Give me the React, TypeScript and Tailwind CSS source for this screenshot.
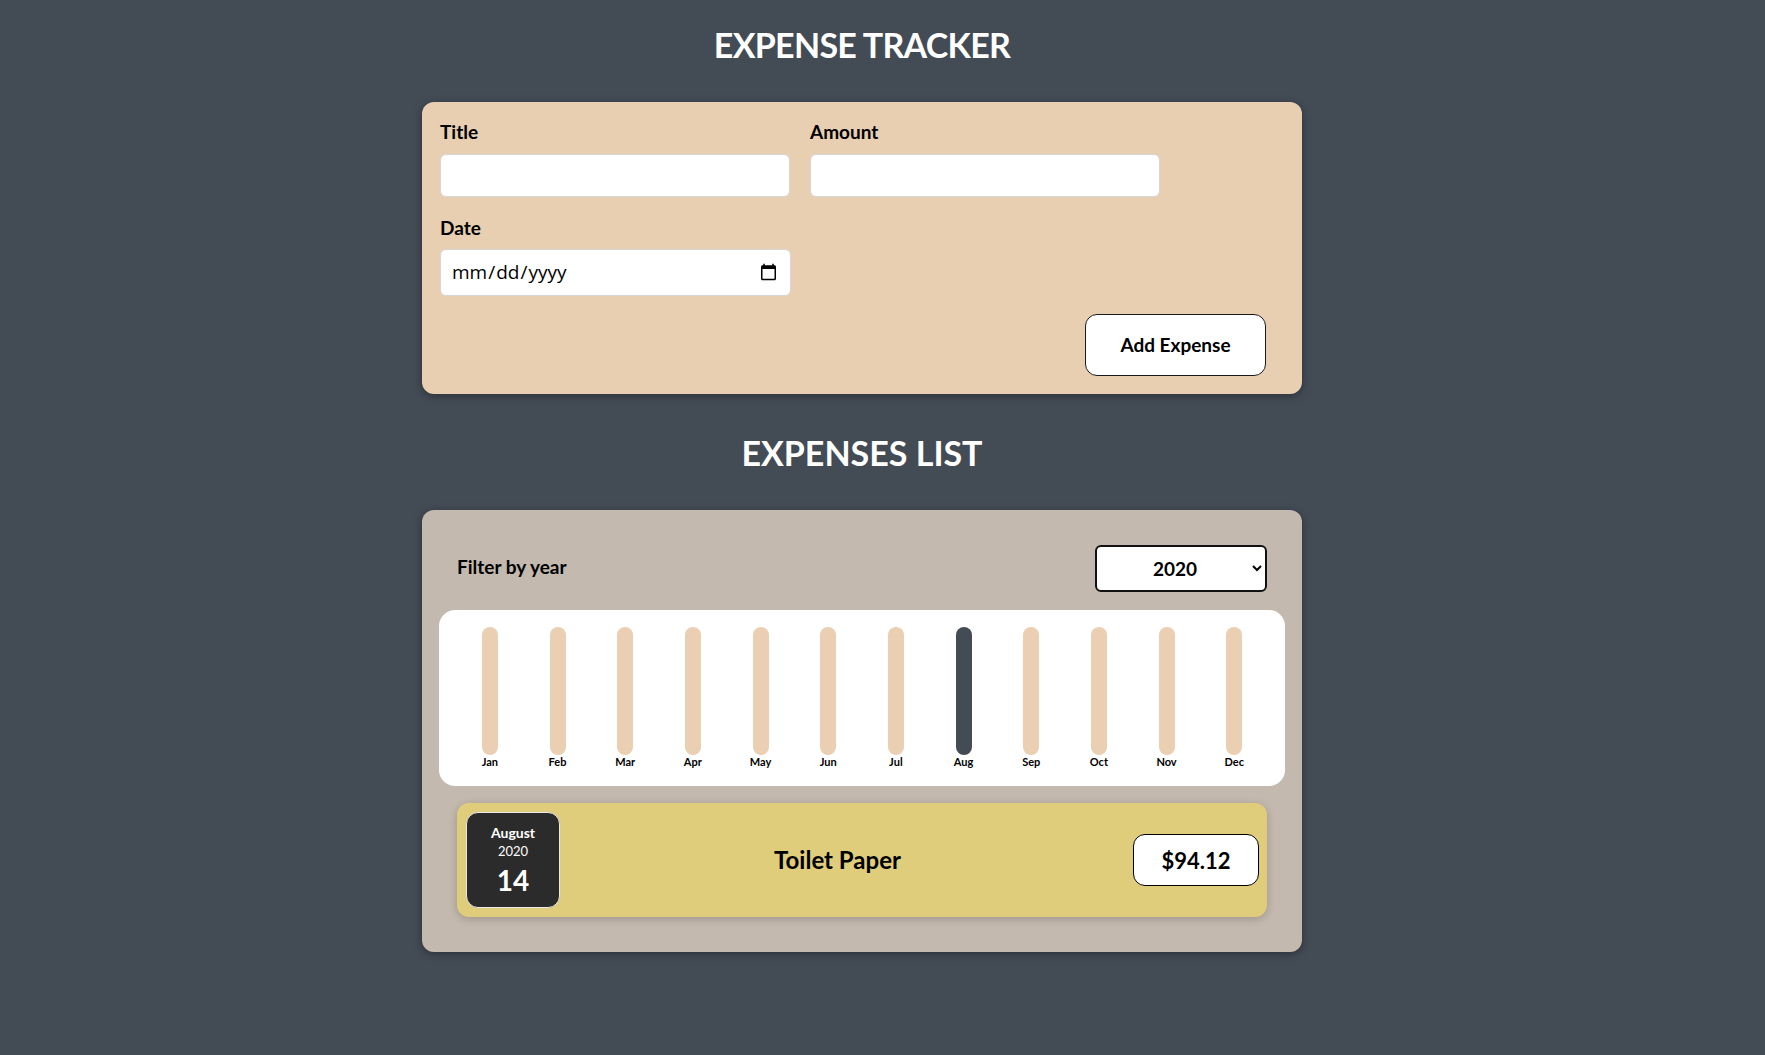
import React from "react";

const months = ["Jan", "Feb", "Mar", "Apr", "May", "Jun", "Jul", "Aug", "Sep", "Oct", "Nov", "Dec"];

function ExpenseForm() {
  return (
    <div className="w-[880px] rounded-[12px] bg-[#e9cfb2] pl-[18px] pr-[36px] pt-[18px] pb-[18px] shadow-[0_2px_8px_rgba(0,0,0,0.35)]">
      <div className="flex flex-wrap gap-x-[20px] gap-y-[19px]">
        <div className="w-[350px]">
          <label className="block text-[19px] leading-[23px] font-bold text-black mb-[11px]">Title</label>
          <input type="text" className="block w-[350px] h-[43px] rounded-[6px] border border-[#d6d6d6] bg-white px-[10px] text-[19px]" />
        </div>
        <div className="w-[350px]">
          <label className="block text-[19px] leading-[23px] font-bold text-black mb-[11px]">Amount</label>
          <input type="number" className="block w-[350px] h-[43px] rounded-[6px] border border-[#d6d6d6] bg-white px-[10px] text-[19px]" />
        </div>
        <div className="w-[350px]">
          <label className="block text-[19px] leading-[23px] font-bold text-black mb-[10px]">Date</label>
          <input
            type="date"
            className="block w-[351px] h-[47px] rounded-[6px] border border-[#d6d6d6] bg-white px-[10px] text-[19px] text-black [font-family:'Open_Sans',sans-serif]"
          />
        </div>
      </div>
      <div className="flex justify-end mt-[18px]">
        <button className="w-[181px] h-[62px] rounded-[12px] border border-[#1a1a1a] bg-white text-[19px] font-bold text-black">
          Add Expense
        </button>
      </div>
    </div>
  );
}

function Chart() {
  return (
    <div className="flex rounded-[16px] bg-white p-[17px]">
      {months.map((m) => (
        <div key={m} className="flex flex-1 flex-col items-center">
          <div className={m === "Aug" ? "w-[16px] h-[128px] rounded-full bg-[#434b55]" : "w-[16px] h-[128px] rounded-full bg-[#eacfb2]"} />
          <div className="text-[11px] leading-[14px] font-bold text-black">{m}</div>
        </div>
      ))}
    </div>
  );
}

function ExpenseItem() {
  return (
    <div className="mx-[18px] mt-[17px] mb-[18px] flex items-center rounded-[12px] bg-[#e0cd7b] p-[9px] pr-[8px] shadow-[0_2px_8px_rgba(0,0,0,0.2)]">
      <div className="flex w-[94px] h-[96px] flex-col items-center justify-center rounded-[12px] border border-[#e8e8e8] bg-[#2b2b2b] text-white">
        <div className="text-[14px] leading-[17px] font-bold">August</div>
        <div className="text-[13px] leading-[16px] mt-[2px]">2020</div>
        <div className="text-[28px] leading-[34px] font-bold mt-[4px]">14</div>
      </div>
      <div className="flex-1 pr-[18px] text-center text-[24px] font-bold text-black">Toilet Paper</div>
      <div className="flex w-[126px] h-[52px] items-center justify-center rounded-[12px] border border-black bg-white text-[22px] font-bold text-black">
        $94.12
      </div>
    </div>
  );
}

export default function App() {
  return (
    <div className="min-h-screen bg-[#434b55] pr-[41px] pt-[24px] pb-[40px] [font-family:Lato,'Open_Sans',sans-serif]">
      <div className="mx-auto flex w-[880px] flex-col items-center">
        <h1 className="text-[34px] leading-[41px] font-bold tracking-[-0.7px] text-white">EXPENSE TRACKER</h1>
        <div className="mt-[37px]">
          <ExpenseForm />
        </div>
        <h2 className="mt-[38px] text-[34px] leading-[41px] font-bold text-white">EXPENSES LIST</h2>
        <div className="mt-[37px] w-[880px] rounded-[12px] bg-[#c4b9ae] p-[17px] shadow-[0_2px_8px_rgba(0,0,0,0.35)]">
          <div className="mx-[18px] mt-[18px] mb-[18px] flex items-center justify-between">
            <span className="text-[19px] leading-[23px] font-bold text-black -mt-[4px]">Filter by year</span>
            <select
              defaultValue="2020"
              className="w-[172px] h-[47px] rounded-[6px] border-2 border-[#111] bg-white px-[8px] text-[19px] font-bold text-black text-center [text-align-last:center]"
            >
              <option value="2022">2022</option>
              <option value="2021">2021</option>
              <option value="2020">2020</option>
              <option value="2019">2019</option>
            </select>
          </div>
          <Chart />
          <ExpenseItem />
        </div>
      </div>
    </div>
  );
}
